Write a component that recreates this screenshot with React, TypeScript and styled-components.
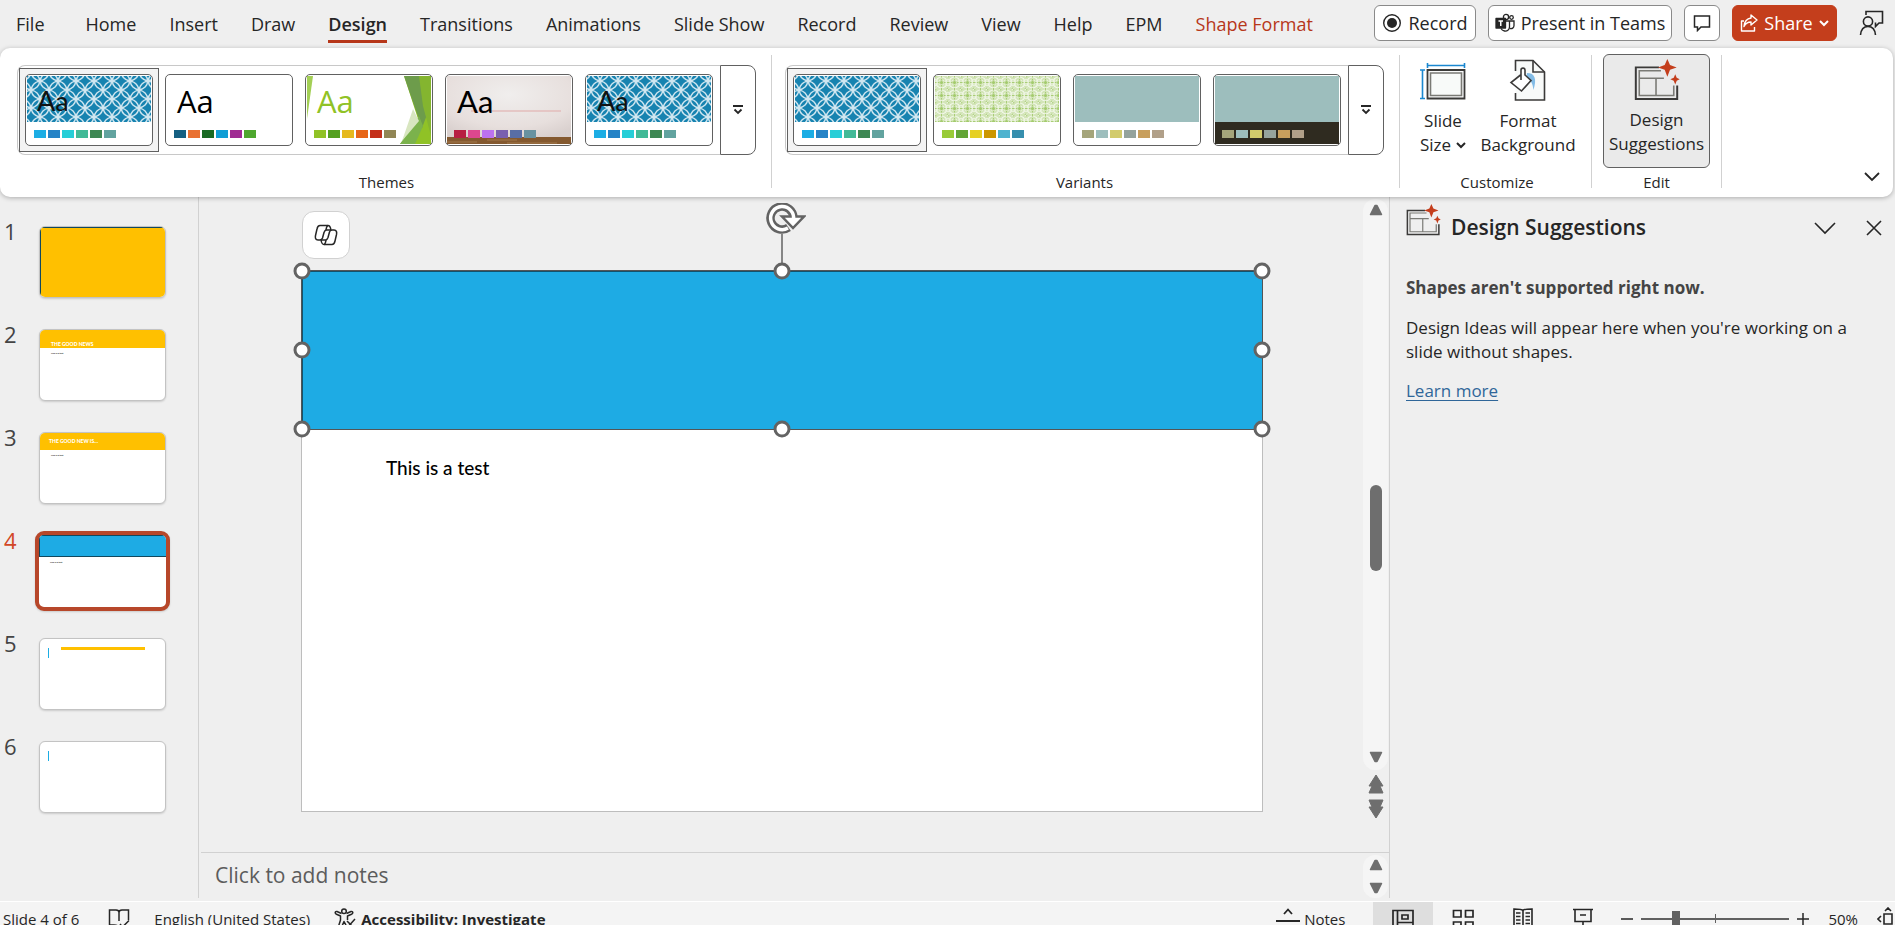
import React from "react";
import styled, { createGlobalStyle, css } from "styled-components";

const ink = "#262626";
const line = "#d1d1d1";
const frame = "#616161";
const accent = "#c43e1c";

const GlobalStyle = createGlobalStyle`
  *, *::before, *::after { box-sizing: border-box; }
  body {
    margin: 0;
    background: #efefef;
    color: ${ink};
    font-family: "Open Sans", "Noto Sans", sans-serif;
    font-size: 17px;
    overflow: hidden;
  }
  button, input, textarea { font: inherit; color: inherit; }
  svg { display: block; flex: none; }
`;

const plainButton = css`
  padding: 0;
  border: 0;
  background: none;
  display: flex;
  align-items: center;
  justify-content: center;
  cursor: pointer;
`;

const Window = styled.div`
  height: 100vh;
  display: flex;
  flex-direction: column;
`;

/* ---------- title row ---------- */

const TopBar = styled.header`
  height: 48px;
  flex: none;
  display: flex;
  align-items: flex-start;
  justify-content: space-between;
  padding: 5px 11px 0 0;
`;

const Tabs = styled.nav`
  display: flex;
  padding-left: 16px;
  gap: 33px;
`;

const Tab = styled.button<{ $active?: boolean; $accent?: boolean; $first?: boolean }>`
  ${plainButton}
  height: 38px;
  margin-right: ${(p) => (p.$first ? "8px" : "0")};
  font-size: 18px;
  white-space: nowrap;
  font-weight: ${(p) => (p.$active ? 600 : 400)};
  color: ${(p) => (p.$accent ? "#b7371a" : ink)};
  box-shadow: ${(p) => (p.$active ? "inset 0 -3px 0 #b7371a" : "none")};
`;

const Actions = styled.div`
  display: flex;
  align-items: center;
  gap: 12px;
`;

const ActionButton = styled.button<{ $primary?: boolean; $width?: number }>`
  ${plainButton}
  height: 36px;
  padding: 0 6px;
  gap: 6px;
  width: ${(p) => (p.$width ? `${p.$width}px` : "auto")};
  border: 1px solid ${(p) => (p.$primary ? accent : "#8a8a8a")};
  border-radius: 6px;
  background: ${(p) => (p.$primary ? accent : "#fff")};
  color: ${(p) => (p.$primary ? "#fff" : ink)};
  font-size: 18px;
  white-space: nowrap;
`;

const AccountButton = styled.button`
  ${plainButton}
  width: 26px;
  height: 36px;
  margin-left: 9px;
`;

/* ---------- ribbon ---------- */

const Ribbon = styled.section`
  height: 149px;
  flex: none;
  display: flex;
  margin-right: 2px;
  padding-top: 7px;
  background: #fff;
  border-radius: 10px;
  box-shadow: 0 1px 5px rgba(0, 0, 0, 0.28);
  position: relative;
  z-index: 1;
`;

const Group = styled.div<{ $pad: string }>`
  height: 133px;
  padding: ${(p) => p.$pad};
  border-right: 1px solid ${line};
  display: flex;
  flex-direction: column;
  justify-content: space-between;
`;

const GroupLabel = styled.div`
  font-size: 15px;
  line-height: 12px;
  text-align: center;
`;

const Gallery = styled.div`
  display: flex;
  height: 90px;
  margin-top: 10px;
`;

const GalleryCells = styled.div`
  display: flex;
  padding: 2px 1px;
  border: 1px solid #c8c8c8;
  border-right: 0;
  border-radius: 8px 0 0 8px;
`;

const Cell = styled.button<{ $selected?: boolean }>`
  ${plainButton}
  width: 140px;
  height: 84px;
  border: 1px solid ${(p) => (p.$selected ? frame : "transparent")};
  background: ${(p) => (p.$selected ? "#f3f3f3" : "none")};
`;

const GalleryMore = styled.button`
  ${plainButton}
  width: 36px;
  border: 1px solid ${frame};
  border-radius: 0 8px 8px 0;
`;

const ThemeCard = styled.span`
  display: grid;
  width: 128px;
  height: 72px;
  padding: 1px;
  border: 1px solid ${frame};
  border-radius: 5px;
  background: #fff;
  overflow: hidden;

  > * { grid-area: 1 / 1; }
`;

const Sample = styled.span<{ $color: string; $font: string; $size: number }>`
  padding: 9px 0 0 10px;
  text-align: left;
  font-family: ${(p) => p.$font}, sans-serif;
  font-size: ${(p) => p.$size}px;
  line-height: 32px;
  color: ${(p) => p.$color};
`;

const Swatches = styled.span`
  align-self: end;
  display: flex;
  gap: 2px;
  padding: 0 0 6px 7px;
`;

const Swatch = styled.span<{ $color: string }>`
  width: 12px;
  height: 8px;
  background: ${(p) => p.$color};
`;

const Commands = styled.div`
  display: flex;
  margin-top: -1px;
`;

const Command = styled.button<{ $width: number; $pressed?: boolean }>`
  ${plainButton}
  flex-direction: column;
  justify-content: flex-start;
  width: ${(p) => p.$width}px;
  height: 114px;
  padding-top: 4px;
  border: 1px solid ${(p) => (p.$pressed ? frame : "transparent")};
  border-radius: 6px;
  background: ${(p) => (p.$pressed ? "#eaeaea" : "none")};
  font-size: 17px;
  line-height: 24px;
  gap: 8px;
`;

const CommandLine = styled.span`
  display: flex;
  align-items: center;
  justify-content: center;
  gap: 5px;
`;

const CollapseButton = styled.button`
  ${plainButton}
  align-self: flex-end;
  width: 32px;
  height: 32px;
  margin: 0 5px 4px auto;
`;

/* ---------- workspace ---------- */

const Workspace = styled.main`
  flex: 1;
  min-height: 0;
  display: flex;
  margin-bottom: 3px;
`;

const SlideList = styled.ol`
  width: 199px;
  flex: none;
  margin: 0;
  padding: 20px 0 0 4px;
  list-style: none;
  border-right: 1px solid ${line};
`;

const SlideItem = styled.li<{ $current?: boolean }>`
  display: flex;
  align-items: flex-start;
  height: 103px;
  color: ${(p) => (p.$current ? "#d24726" : "#444")};
`;

const SlideNumber = styled.span`
  width: 31px;
  padding-top: 2px;
  font-size: 22px;
  line-height: 24px;
`;

const SlideThumb = styled.button<{ $current?: boolean }>`
  ${plainButton}
  width: ${(p) => (p.$current ? 135 : 127)}px;
  height: ${(p) => (p.$current ? 80 : 72)}px;
  margin: ${(p) => (p.$current ? "5px 0 0" : "9px 0 0 4px")};
  border: ${(p) => (p.$current ? "4px solid #b7472a" : "1px solid #c3c3c3")};
  border-radius: ${(p) => (p.$current ? 9 : 6)}px;
  background: #fff;
  box-shadow: 0 1px 2px rgba(0, 0, 0, 0.15);
  overflow: hidden;
  flex-direction: column;
  align-items: stretch;
  justify-content: flex-start;
  text-align: left;
`;

const ThumbBanner = styled.span<{ $color: string; $height: string; $outlined?: boolean; $pad?: string }>`
  height: ${(p) => p.$height};
  flex: none;
  padding: ${(p) => p.$pad ?? "0"};
  background: ${(p) => p.$color};
  box-shadow: ${(p) => (p.$outlined ? "inset 1px 1px 0 #12485e" : "none")};
  border-bottom: ${(p) => (p.$outlined && p.$height !== "100%" ? "1px solid #12485e" : "0")};
  font-family: Lato, sans-serif;
  font-size: 5px;
  line-height: 6px;
  font-weight: 900;
  color: #fff;
`;

const ThumbBody = styled.span`
  padding: 4px 0 0 11px;
  font-size: 2px;
  line-height: 4px;
  font-weight: 700;
  color: #333;
`;

const ThumbMarks = styled.span`
  display: flex;
  gap: 12px;
  padding: 8px 0 0 8px;
`;

const TextCaret = styled.span`
  width: 1px;
  height: 10px;
  margin-top: 1px;
  background: #1cade4;
`;

const GoldRule = styled.span`
  width: 84px;
  height: 3px;
  background: #ffc000;
`;

const Editor = styled.section`
  flex: 1;
  min-width: 0;
  display: flex;
  flex-direction: column;
`;

const CanvasRow = styled.div`
  flex: 1;
  min-height: 0;
  display: flex;
`;

const Canvas = styled.div`
  flex: 1;
  min-width: 0;
  padding: 14px 100px 0 102px;
`;

const CopilotButton = styled.button`
  ${plainButton}
  width: 48px;
  height: 48px;
  margin: 0 0 11px 1px;
  border: 1px solid ${line};
  border-radius: 12px;
  background: #fff;
`;

const Slide = styled.div`
  aspect-ratio: 961 / 541;
  background: #fff;
  border: 1px solid #bdbdbd;
`;

const Shape = styled.div`
  position: relative;
  height: 29.6%;
  margin: -1px -1px 0;
  background: #1eabe4;
  border: 1px solid #555;
  box-shadow: inset 1px 1px 0 #14526c;
`;

const Handle = styled.span<{ $x: string; $y: string }>`
  position: absolute;
  left: ${(p) => p.$x};
  top: ${(p) => p.$y};
  width: 17px;
  height: 17px;
  transform: translate(-50%, -50%);
  border: 3px solid #636363;
  border-radius: 50%;
  background: #fff;
`;

const RotateHandle = styled.svg`
  position: absolute;
  left: 50%;
  bottom: 100%;
  margin-left: -16px;
`;

const SlideText = styled.p`
  margin: 0;
  padding: 24px 84px;
  font-family: Lato, sans-serif;
  font-size: 19px;
  line-height: 28px;
  font-weight: 500;
  color: #000;
`;

const ScrollColumn = styled.div`
  width: 26px;
  flex: none;
  display: flex;
  flex-direction: column;
  gap: 2px;
`;

const ScrollTrack = styled.div<{ $height: string; $pad: string }>`
  width: 25px;
  height: ${(p) => p.$height};
  margin-top: 2px;
  padding: ${(p) => p.$pad};
  border-radius: 12px;
  background: #f5f5f5;
  display: flex;
  flex-direction: column;
  align-items: center;
  justify-content: space-between;
`;

const ScrollThumb = styled.div`
  width: 12px;
  height: 86px;
  border-radius: 6px;
  background: #6e6e6e;
  margin-top: 88px;
`;

const ScrollButton = styled.button`
  ${plainButton}
  width: 25px;
  height: 14px;
`;

const PageButton = styled(ScrollButton)`
  height: 23px;
`;

const NotesRow = styled.div`
  height: 46px;
  flex: none;
  margin-left: 2px;
  border-top: 1px solid ${line};
  display: flex;
  justify-content: space-between;
`;

const NotesField = styled.textarea`
  flex: 1;
  height: 45px;
  padding: 7px 14px;
  border: 0;
  outline: 0;
  resize: none;
  background: transparent;
  font-size: 21px;
  line-height: 30px;
  overflow: hidden;

  &::placeholder { color: #5c5c5c; opacity: 1; }
`;

const Pane = styled.aside`
  width: 506px;
  flex: none;
  padding: 7px 9px 0 16px;
  border-left: 1px solid ${line};
`;

const PaneHeader = styled.div`
  display: flex;
  align-items: flex-start;
  gap: 10px;
`;

const PaneTitle = styled.h2`
  flex: 1;
  margin: 0;
  padding-top: 8px;
  font-size: 21px;
  line-height: 30px;
  font-weight: 600;
`;

const PaneButton = styled.button`
  ${plainButton}
  width: 24px;
  height: 24px;
  margin: 12px 0 0 15px;
`;

const PaneBody = styled.div`
  padding: 34px 4px 0 0;
  line-height: 24px;
`;

const PaneLead = styled.p`
  margin: 0 0 16px;
  font-weight: 700;
  color: #444;
`;

const PaneText = styled.p`
  margin: 0 0 15px;
`;

const PaneLink = styled.a`
  color: #2f6699;
  text-underline-offset: 3px;
`;

/* ---------- status bar ---------- */

const StatusBar = styled.footer`
  height: 24px;
  flex: none;
  display: flex;
  align-items: flex-start;
  justify-content: space-between;
  background: #f4f4f4;
  border-top: 1px solid #fff;
  font-size: 15px;
  overflow: hidden;
`;

const StatusSide = styled.div`
  display: flex;
  align-items: center;
  height: 34px;
`;

const StatusItem = styled.button<{ $gap?: number; $bold?: boolean }>`
  ${plainButton}
  height: 34px;
  margin-left: ${(p) => p.$gap ?? 0}px;
  gap: 4px;
  white-space: nowrap;
  font-weight: ${(p) => (p.$bold ? 700 : 400)};
`;

const ViewButtons = styled.div`
  display: flex;
  margin-left: 28px;
`;

const ViewButton = styled.button<{ $active?: boolean }>`
  ${plainButton}
  width: 60px;
  height: 34px;
  background: ${(p) => (p.$active ? "#dedede" : "none")};
`;

const ZoomTrack = styled.div`
  position: relative;
  width: 148px;
  height: 34px;
  margin: 0 8px;
  display: flex;
  align-items: center;
`;

const ZoomTick = styled.span`
  position: absolute;
  left: 50%;
  top: 12px;
  width: 1px;
  height: 9px;
  background: ${frame};
`;

const ZoomSlider = styled.input`
  width: 100%;
  height: 16px;
  margin: 0;
  appearance: none;
  background: linear-gradient(${frame}, ${frame}) center / 100% 2px no-repeat;

  &::-webkit-slider-thumb {
    appearance: none;
    width: 8px;
    height: 16px;
    background: #616161;
  }
`;

/* ---------- drawings ---------- */

const Chevron = ({ w, stroke = 2 }: { w: number; stroke?: number }) => (
  <svg width={w} height={w / 2 + 2} viewBox={`0 0 ${w} ${w / 2 + 2}`} fill="none" stroke="currentColor" strokeWidth={stroke}>
    <path d={`M1 1L${w / 2} ${w / 2}L${w - 1} 1`} />
  </svg>
);

const Triangle = ({ down }: { down?: boolean }) => (
  <svg width="14" height="12" viewBox="0 0 14 12" fill="#6e6e6e" stroke="#6e6e6e" strokeWidth="1.5" strokeLinejoin="round">
    <path d={down ? "M1.500 1.500H12.500L8 10.500H6Z" : "M1.500 10.500H12.500L8 1.500H6Z"} />
  </svg>
);

const DoubleTriangle = ({ down }: { down?: boolean }) => (
  <svg width="16" height="20" viewBox="0 0 16 20" fill="#6e6e6e" stroke="#6e6e6e" strokeLinejoin="round">
    <path d={down ? "M1 1H15L12 8H15L8 19L1 8H4Z" : "M1 19H15L12 12H15L8 1L1 12H4Z"} />
  </svg>
);

const MoreIcon = () => (
  <svg width="12" height="12" viewBox="0 0 12 12" fill="none" stroke={ink} strokeWidth="1.8">
    <path d="M1 2H11M2.500 5.500L6 9L9.500 5.500" />
  </svg>
);

const RecordIcon = () => (
  <svg width="20" height="20" viewBox="0 0 20 20">
    <circle cx="10" cy="10" r="8.300" fill="none" stroke={ink} strokeWidth="1.400" />
    <circle cx="10" cy="10" r="5" fill={ink} />
  </svg>
);

const TeamsIcon = () => (
  <svg width="20" height="20" viewBox="0 0 20 20" fill="none" stroke={ink} strokeWidth="1.300">
    <circle cx="11" cy="4" r="2.600" />
    <circle cx="16.500" cy="4.500" r="1.800" />
    <path d="M11 8H14.500V14C14.500 17 12 18.500 9.500 18C7.500 17.600 6.500 16.500 6 15.500M14.500 8H19V12.500C19 15 17 16 15 15.500" />
    <path d="M1 5.500H10.500V15H1Z" fill={ink} stroke={ink} strokeLinejoin="round" />
    <path d="M3.500 8H8M5.750 8V13" stroke="#fff" strokeWidth="1.500" />
  </svg>
);

const CommentIcon = () => (
  <svg width="18" height="17" viewBox="0 0 18 17" fill="none" stroke={ink} strokeWidth="1.500">
    <path d="M1.500 1H16.500V12H8L4.500 15.500V12H1.500Z" />
  </svg>
);

const ShareIcon = () => (
  <svg width="18" height="20" viewBox="0 0 18 20" fill="none" stroke="#fff" strokeWidth="1.400" strokeLinejoin="round">
    <path d="M4 8H1.500V18H14.500V14" />
    <path d="M11 2L17 7L11 12V9C7.500 9 5.500 10.500 4 13.500C4.500 8.500 7 5.500 11 5Z" />
  </svg>
);

const AccountIcon = () => (
  <svg width="25" height="26" viewBox="0 0 25 26" fill="none" stroke={ink} strokeWidth="1.600">
    <path d="M7 5V1.500H23.500V13H20L16.500 16.500V12.500" />
    <circle cx="9" cy="11.500" r="4.600" />
    <path d="M1.500 25C2 19.500 5 16.500 9 16.500S16 19.500 16.500 25" />
  </svg>
);

const SlideSizeIcon = () => (
  <svg width="46" height="42" viewBox="0 0 46 42" fill="none">
    <path d="M7.500 6.500H44.500M7.500 4V9M44.500 4V9M2.500 11V39.500M0 11H5M0 39.500H5" stroke="#1a87d0" strokeWidth="1.600" />
    <path d="M7.500 11H44.500V39.500H7.500Z" stroke="#3b3a39" strokeWidth="1.800" fill="#fafafa" />
    <path d="M10.500 14H41.500V36.500H10.500Z" stroke="#7a7a75" strokeWidth="1.600" fill="#f8faf9" />
  </svg>
);

const FormatBackgroundIcon = () => (
  <svg width="38" height="42" viewBox="0 0 38 42" fill="none" stroke="#3b3a39" strokeWidth="1.600">
    <path d="M6.500 12V1.500H24L35.500 13V41H6.500V34" fill="#f8faf9" />
    <path d="M24 1.500V13H35.500" />
    <path d="M18 14C26 14 28 20 24.500 31C23.500 24 22 20 17 20Z" fill="#83bce6" stroke="none" />
    <path d="M11.500 16L2 23.500L12.500 32L22 21.500L16 16V11C16 8.500 12 8.500 12 11V21" fill="#fff" />
  </svg>
);

const DesignIcon = ({ w }: { w: number }) => (
  <svg width={w} height={w * 0.9} viewBox="0 0 46 42" fill="none">
    <path d="M25 8.500H1.500V40.500H43.500V27" stroke="#3b3a39" strokeWidth="2" />
    <path d="M27 12H5V37H40V27M5 19.500H30M22 19.500V37" stroke="#7a7a75" strokeWidth="1.600" />
    <path d="M33.500 0L36.200 6L43 8.500L36.200 11L33.500 18L30.800 11L24 8.500L30.800 6Z" fill={accent} />
    <path d="M41.500 15.500L43 19L46 20.500L43 22L41.500 26L40 22L36.500 20.500L40 19Z" fill={accent} />
  </svg>
);

const CopilotIcon = () => (
  <svg width="24" height="22" viewBox="0 0 24 22" fill="none" stroke={ink} strokeWidth="1.500" strokeLinejoin="round">
    <path d="M6 1.500H14C16 1.500 16.500 3 17 6H12.500C11 6 10.500 7 10 8.500L8.500 14C8 15.500 7.500 16 6 16H4C1.500 16 1 14 1.500 11.500L3 5C3.500 2.500 4.500 1.500 6 1.500Z" />
    <path d="M18 20.500H10C8 20.500 7.500 19 7 16H11.500C13 16 13.500 15 14 13.500L15.500 8C16 6.500 16.500 6 18 6H20C22.500 6 23 8 22.500 10.500L21 17C20.500 19.500 19.500 20.500 18 20.500Z" />
    <path d="M14 1.500C12.500 2 12.300 4 12 6M10 20.500C11.500 20 11.700 18 12 16" />
  </svg>
);

const RingPattern = ({ id }: { id: string }) => (
  <svg width="124" height="68" viewBox="0 0 124 68">
    <defs>
      <pattern id={id} x="4" y="5" width="18" height="18" patternUnits="userSpaceOnUse">
        <rect width="18" height="18" fill="#1783b0" />
        <g fill="none" stroke="#cfe6f0" strokeWidth="1.400">
          <circle cx="0" cy="0" r="8.600" />
          <circle cx="18" cy="0" r="8.600" />
          <circle cx="0" cy="18" r="8.600" />
          <circle cx="18" cy="18" r="8.600" />
          <circle cx="9" cy="9" r="8.600" />
        </g>
        <path d="M9 -3V3M6 0H12M9 15V21M6 18H12M0 6V12M-3 9H3M18 6V12M15 9H21" stroke="#cfe6f0" strokeWidth="1.200" />
      </pattern>
    </defs>
    <rect width="124" height="46" fill={`url(#${id})`} />
  </svg>
);

const GreenPattern = () => (
  <svg width="124" height="68" viewBox="0 0 124 68">
    <defs>
      <pattern id="lattice" width="13" height="13" patternUnits="userSpaceOnUse">
        <rect width="13" height="13" fill="#d3e5b8" />
        <circle cx="6.500" cy="6.500" r="5.500" fill="none" stroke="#f3f8ea" strokeWidth="1.200" />
        <circle cx="0" cy="6.500" r="3" fill="none" stroke="#eef5e2" />
        <circle cx="13" cy="6.500" r="3" fill="none" stroke="#eef5e2" />
        <path d="M0 6.500H13M6.500 0V13" stroke="#a9cd76" strokeDasharray="1.500 1.500" />
        <path d="M0 0L13 13M13 0L0 13" stroke="#f3f8ea" strokeDasharray="1 2" />
        <circle cx="6.500" cy="6.500" r="1.500" fill="#a3cb6c" />
        <circle cx="0" cy="0" r="1.500" fill="#b5d488" />
        <circle cx="13" cy="13" r="1.500" fill="#b5d488" />
      </pattern>
    </defs>
    <rect width="124" height="46" fill="url(#lattice)" />
  </svg>
);

const FacetArt = () => (
  <svg width="124" height="68" viewBox="0 0 124 68">
    <path d="M0 0H6L0 43Z" fill="#a3cf55" />
    <path d="M97 0H124V68H93L112 46Z" fill="#90c226" />
    <path d="M97 0H116L124 28L115 52Z" fill="#6d9c4b" />
    <path d="M112 0H124V60L116 30Z" fill="#84b52f" />
    <path d="M93 68L112 40L116 50L108 68Z" fill="#7bb24c" />
    <path d="M95 65L106 33L112 45Z" fill="#d8e6c0" />
  </svg>
);

const WoodArt = () => (
  <svg width="124" height="68" viewBox="0 0 124 68">
    <defs>
      <radialGradient id="wall" cx="0.5" cy="0.3" r="0.75">
        <stop offset="0" stopColor="#f0eeed" />
        <stop offset="0.7" stopColor="#e7dfdd" />
        <stop offset="1" stopColor="#d9d0ce" />
      </radialGradient>
    </defs>
    <rect width="124" height="62" fill="url(#wall)" />
    <rect y="61" width="124" height="7" fill="#84592f" />
    <path d="M0 66H30M40 64H70M60 67H110" stroke="#a27a4c" />
    <path d="M24 35H114" stroke="#e3bdbb" strokeWidth="1.500" />
  </svg>
);

const PlainArt = ({ base }: { base: string }) => (
  <svg width="124" height="68" viewBox="0 0 124 68">
    <rect width="124" height="68" fill={base} />
    <rect width="124" height="46" fill="#9dbebd" />
  </svg>
);

const ProofIcon = () => (
  <svg width="22" height="22" viewBox="0 0 22 22" fill="none" stroke={ink} strokeWidth="1.500">
    <path d="M11 19C10 17.500 9 17 6 17H1.500V2H8C10 2 11 3 11 4.500V13M11 4.500C11 3 12 2 14 2H20.500V12M12 16L14.500 19L21 12.500" />
  </svg>
);

const AccessibilityIcon = () => (
  <svg width="23" height="23" viewBox="0 0 23 23" fill="none" stroke={ink} strokeWidth="1.500" strokeLinejoin="round">
    <circle cx="10" cy="3.200" r="2.300" />
    <path d="M7.500 5.500L3 3.500C1 3 .5 5.500 2.500 6.300L6.500 8V12L4 20C4 22 6 22 7 20.500L10 13.500L12 17M12.500 5.500L17 3.500C19 3 19.500 5.500 17.500 6.300L13.500 8V12" />
    <path d="M13 13L21 21M21 11L12 21" />
  </svg>
);

const NotesIcon = () => (
  <svg width="24" height="22" viewBox="0 0 24 22" fill="none" stroke={ink} strokeWidth="1.800">
    <path d="M8 6L12 1.500L16 6M0 13H24M0 19H24" />
  </svg>
);

const NormalViewIcon = () => (
  <svg width="22" height="20" viewBox="0 0 22 20" fill="none" stroke={ink} strokeWidth="1.700">
    <path d="M1 1.500H21V19H1ZM5.500 1.500V19M5.500 13.500H21M10 6H16V10H10Z" />
  </svg>
);

const GridViewIcon = () => (
  <svg width="22" height="20" viewBox="0 0 22 20" fill="none" stroke={ink} strokeWidth="1.700">
    <path d="M1.500 1.500H9V8H1.500ZM13.500 1.500H21V8H13.500ZM1.500 13H9V19.500H1.500ZM13.500 13H21V19.500H13.500Z" />
  </svg>
);

const ReadingViewIcon = () => (
  <svg width="20" height="22" viewBox="0 0 20 22" fill="none" stroke={ink} strokeWidth="1.600">
    <path d="M10 2.500C9 1 7 1 1 1V19H8L10 20L12 19H19V1C13 1 11 1 10 2.500ZM10 2.500V19" />
    <path d="M3 5H7.500M3 8.500H7.500M3 12H7.500M3 15.500H7.500M12.500 5H17M12.500 8.500H17M12.500 12H17M12.500 15.500H17" />
  </svg>
);

const ShowIcon = () => (
  <svg width="20" height="22" viewBox="0 0 20 22" fill="none" stroke={ink} strokeWidth="1.600">
    <path d="M0 1.500H20M2 1.500V13.500H18V1.500M7 7H13M10 13.500V21M5 21H15" />
  </svg>
);

const FitIcon = () => (
  <svg width="18" height="24" viewBox="0 0 18 24" fill="none" stroke={ink} strokeWidth="1.600">
    <path d="M7 7H15V17H7ZM8 4L11 1L14 4M8 20L11 23L14 20M4 9L1 12L4 15" />
  </svg>
);

/* ---------- data ---------- */

const tabs = ["File", "Home", "Insert", "Draw", "Design", "Transitions", "Animations", "Slide Show", "Record", "Review", "View", "Help", "EPM", "Shape Format"];

const integral = ["#1cade4", "#2683c6", "#27ced7", "#42ba97", "#3e8853", "#62a39f"];

const themes = [
  { name: "Integral", art: <RingPattern id="rings-a" />, font: "Lato", size: 27, color: "#111", colors: integral },
  { name: "Office Theme", art: null, font: '"Open Sans"', size: 31, color: "#000", colors: ["#156082", "#e97132", "#196b24", "#0f9ed5", "#a02b93", "#4ea72e"] },
  { name: "Facet", art: <FacetArt />, font: '"Open Sans"', size: 31, color: "#90c226", colors: ["#90c226", "#54a021", "#e6b91e", "#e76618", "#c42f1a", "#918655"] },
  { name: "Gallery", art: <WoodArt />, font: "Lato", size: 31, color: "#000", colors: ["#b71e42", "#de478e", "#bc72f0", "#795faf", "#586ea6", "#6892a0"] },
  { name: "Integral 2", art: <RingPattern id="rings-b" />, font: "Lato", size: 27, color: "#111", colors: integral },
];

const sand = ["#a5a57b", "#9dbebd", "#d2cb6c", "#95a39d", "#c89f5d", "#b1a089"];

const variants = [
  { name: "Variant 1", art: <RingPattern id="rings-c" />, colors: integral },
  { name: "Variant 2", art: <GreenPattern />, colors: ["#99cb38", "#63a537", "#e6d024", "#cc9700", "#4eb3cf", "#378fae"] },
  { name: "Variant 3", art: <PlainArt base="#fff" />, colors: sand },
  { name: "Variant 4", art: <PlainArt base="#2f2b20" />, colors: sand },
];

const slides = [
  <ThumbBanner $color="#ffc000" $height="100%" $outlined />,
  <>
    <ThumbBanner $color="#ffc000" $height="18px" $pad="11px 0 0 11px">THE GOOD NEWS</ThumbBanner>
    <ThumbBody>This is a test</ThumbBody>
  </>,
  <>
    <ThumbBanner $color="#ffc000" $height="17px" $pad="5px 0 0 9px">THE GOOD NEW IS…</ThumbBanner>
    <ThumbBody>This is a test</ThumbBody>
  </>,
  <>
    <ThumbBanner $color="#1eabe4" $height="22px" $outlined />
    <ThumbBody>This is a test</ThumbBody>
  </>,
  <ThumbMarks><TextCaret /><GoldRule /></ThumbMarks>,
  <ThumbMarks><TextCaret /></ThumbMarks>,
];

const handles = [["0%", "0%"], ["50%", "0%"], ["100%", "0%"], ["0%", "50%"], ["100%", "50%"], ["0%", "100%"], ["50%", "100%"], ["100%", "100%"]];

const Palette = ({ colors }: { colors: string[] }) => (
  <Swatches>{colors.map((c) => <Swatch key={c} $color={c} />)}</Swatches>
);

export default function App() {
  return (
    <Window>
      <GlobalStyle />
      <TopBar>
        <Tabs aria-label="Ribbon tabs">
          {tabs.map((t) => (
            <Tab key={t} $first={t === "File"} $active={t === "Design"} $accent={t === "Shape Format"}>{t}</Tab>
          ))}
        </Tabs>
        <Actions>
          <ActionButton $width={102}><RecordIcon />Record</ActionButton>
          <ActionButton $width={184}><TeamsIcon />Present in Teams</ActionButton>
          <ActionButton $width={36} aria-label="Comments"><CommentIcon /></ActionButton>
          <ActionButton $primary $width={105}><ShareIcon />Share<Chevron w={10} /></ActionButton>
          <AccountButton aria-label="Account"><AccountIcon /></AccountButton>
        </Actions>
      </TopBar>

      <Ribbon>
        <Group $pad="0 15px 0 17px">
          <Gallery>
            <GalleryCells>
              {themes.map((t, i) => (
                <Cell key={t.name} aria-label={t.name} $selected={i === 0}>
                  <ThemeCard>
                    {t.art}
                    <Sample $color={t.color} $font={t.font} $size={t.size}>Aa</Sample>
                    <Palette colors={t.colors} />
                  </ThemeCard>
                </Cell>
              ))}
            </GalleryCells>
            <GalleryMore aria-label="More themes"><MoreIcon /></GalleryMore>
          </Gallery>
          <GroupLabel>Themes</GroupLabel>
        </Group>
        <Group $pad="0 15px 0 13px">
          <Gallery>
            <GalleryCells>
              {variants.map((v, i) => (
                <Cell key={v.name} aria-label={v.name} $selected={i === 0}>
                  <ThemeCard>
                    {v.art}
                    <Palette colors={v.colors} />
                  </ThemeCard>
                </Cell>
              ))}
            </GalleryCells>
            <GalleryMore aria-label="More variants"><MoreIcon /></GalleryMore>
          </Gallery>
          <GroupLabel>Variants</GroupLabel>
        </Group>
        <Group $pad="0 9px 0 12px">
          <Commands>
            <Command $width={62}>
              <SlideSizeIcon />
              <span>
                Slide
                <CommandLine>Size<Chevron w={10} /></CommandLine>
              </span>
            </Command>
            <Command $width={108}>
              <FormatBackgroundIcon />
              <span>Format<br />Background</span>
            </Command>
          </Commands>
          <GroupLabel>Customize</GroupLabel>
        </Group>
        <Group $pad="0 11px">
          <Commands>
            <Command $width={107} $pressed>
              <DesignIcon w={46} />
              <span>Design<br />Suggestions</span>
            </Command>
          </Commands>
          <GroupLabel>Edit</GroupLabel>
        </Group>
        <CollapseButton aria-label="Collapse ribbon"><Chevron w={16} stroke={1.8} /></CollapseButton>
      </Ribbon>

      <Workspace>
        <SlideList>
          {slides.map((content, i) => (
            <SlideItem key={i} $current={i === 3}>
              <SlideNumber>{i + 1}</SlideNumber>
              <SlideThumb $current={i === 3} aria-label={`Slide ${i + 1}`}>{content}</SlideThumb>
            </SlideItem>
          ))}
        </SlideList>

        <Editor>
          <CanvasRow>
            <Canvas>
              <CopilotButton aria-label="Copilot"><CopilotIcon /></CopilotButton>
              <Slide>
                <Shape>
                  <RotateHandle width="40" height="68" viewBox="0 0 40 68" fill="none">
                    <path d="M16 31V68" stroke="#636363" strokeWidth="1.500" />
                    <path d="M22.500 24.500A11.500 11.500 0 1 1 27.500 15" stroke="#636363" strokeWidth="8.500" />
                    <path d="M16 13.500H38L27 25Z" fill="#fff" stroke="#636363" strokeWidth="2.500" />
                    <path d="M22 25A11.500 11.500 0 1 1 27.500 17" stroke="#fff" strokeWidth="3.500" />
                  </RotateHandle>
                  {handles.map(([x, y]) => <Handle key={x + y} $x={x} $y={y} />)}
                </Shape>
                <SlideText>This is a test</SlideText>
              </Slide>
            </Canvas>
            <ScrollColumn>
              <ScrollTrack $height="571px" $pad="4px 0 6px">
                <ScrollButton aria-label="Scroll up"><Triangle /></ScrollButton>
                <ScrollThumb />
                <ScrollButton aria-label="Scroll down"><Triangle down /></ScrollButton>
              </ScrollTrack>
              <PageButton aria-label="Previous slide"><DoubleTriangle /></PageButton>
              <PageButton aria-label="Next slide"><DoubleTriangle down /></PageButton>
            </ScrollColumn>
          </CanvasRow>
          <NotesRow>
            <NotesField aria-label="Notes" placeholder="Click to add notes" rows={1} />
            <ScrollColumn>
              <ScrollTrack $height="44px" $pad="3px 0">
                <ScrollButton aria-label="Scroll notes up"><Triangle /></ScrollButton>
                <ScrollButton aria-label="Scroll notes down"><Triangle down /></ScrollButton>
              </ScrollTrack>
            </ScrollColumn>
          </NotesRow>
        </Editor>

        <Pane>
          <PaneHeader>
            <DesignIcon w={35} />
            <PaneTitle>Design Suggestions</PaneTitle>
            <PaneButton aria-label="Pane options"><Chevron w={22} stroke={1.6} /></PaneButton>
            <PaneButton aria-label="Close">
              <svg width="16" height="16" viewBox="0 0 16 16" stroke={ink} strokeWidth="1.600"><path d="M1 1L15 15M15 1L1 15" /></svg>
            </PaneButton>
          </PaneHeader>
          <PaneBody>
            <PaneLead>Shapes aren't supported right now.</PaneLead>
            <PaneText>Design Ideas will appear here when you're working on a slide without shapes.</PaneText>
            <PaneLink href="#learn">Learn more</PaneLink>
          </PaneBody>
        </Pane>
      </Workspace>

      <StatusBar>
        <StatusSide>
          <StatusItem $gap={3}>Slide 4 of 6</StatusItem>
          <StatusItem $gap={29} aria-label="Spelling"><ProofIcon /></StatusItem>
          <StatusItem $gap={24}>English (United States)</StatusItem>
          <StatusItem $gap={24} $bold><AccessibilityIcon />Accessibility: Investigate</StatusItem>
        </StatusSide>
        <StatusSide>
          <StatusItem><NotesIcon />Notes</StatusItem>
          <ViewButtons>
            <ViewButton $active aria-label="Normal view"><NormalViewIcon /></ViewButton>
            <ViewButton aria-label="Slide sorter"><GridViewIcon /></ViewButton>
            <ViewButton aria-label="Reading view"><ReadingViewIcon /></ViewButton>
            <ViewButton aria-label="Slide show"><ShowIcon /></ViewButton>
          </ViewButtons>
          <StatusItem $gap={8} aria-label="Zoom out">
            <svg width="12" height="12" viewBox="0 0 12 12" stroke={ink} strokeWidth="1.500"><path d="M0 6H12" /></svg>
          </StatusItem>
          <ZoomTrack>
            <ZoomTick />
            <ZoomSlider type="range" aria-label="Zoom" min={0} max={100} defaultValue={22} />
          </ZoomTrack>
          <StatusItem aria-label="Zoom in">
            <svg width="12" height="12" viewBox="0 0 12 12" stroke={ink} strokeWidth="1.500"><path d="M0 6H12M6 0V12" /></svg>
          </StatusItem>
          <StatusItem $gap={19}>50%</StatusItem>
          <StatusItem $gap={19} aria-label="Fit slide to window"><FitIcon /></StatusItem>
        </StatusSide>
      </StatusBar>
    </Window>
  );
}
